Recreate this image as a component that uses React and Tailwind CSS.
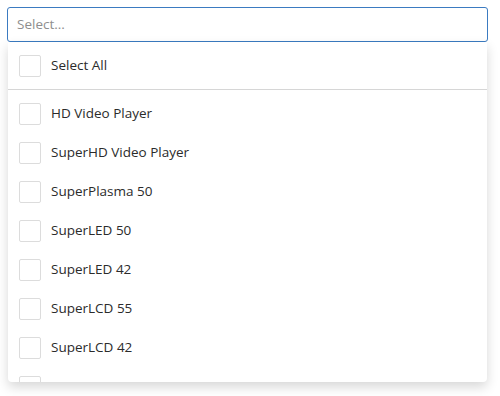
import React from "react";

const items = [
  "HD Video Player",
  "SuperHD Video Player",
  "SuperPlasma 50",
  "SuperLED 50",
  "SuperLED 42",
  "SuperLCD 55",
  "SuperLCD 42",
];

function Box() {
  return <span className="w-[22px] h-[22px] shrink-0 rounded-[2px] border border-[#dcdcdc] bg-white" />;
}

export default function App() {
  return (
    <div
      className="w-[500px] h-[396px] bg-white overflow-hidden pt-[7px] pl-[7px]"
      style={{ fontFamily: '"Open Sans", "Noto Sans", sans-serif' }}
    >
      <div className="w-[481px] h-[35px] border border-[#3b7bc1] rounded-[3px] flex items-center px-[9px] text-[13.5px] text-[#8e8e8e]">
        Select...
      </div>
      <div className="ml-px w-[479px] h-[340px] rounded-b-[4px] bg-white shadow-[0_5px_12px_rgba(0,0,0,0.16)] overflow-hidden text-[13.5px] text-[#2b2b2b]">
        <div className="h-[48px] flex items-center gap-[10px] pl-[11px] border-b border-[#d6d6d6]">
          <Box />
          <span>Select All</span>
        </div>
        <div className="pt-[4px]">
          {items.map((it) => (
            <div key={it} className="h-[39px] flex items-center gap-[10px] pl-[11px]">
              <Box />
              <span>{it}</span>
            </div>
          ))}
          <div className="h-[39px] flex items-center pl-[11px]">
            <Box />
          </div>
        </div>
      </div>
    </div>
  );
}
